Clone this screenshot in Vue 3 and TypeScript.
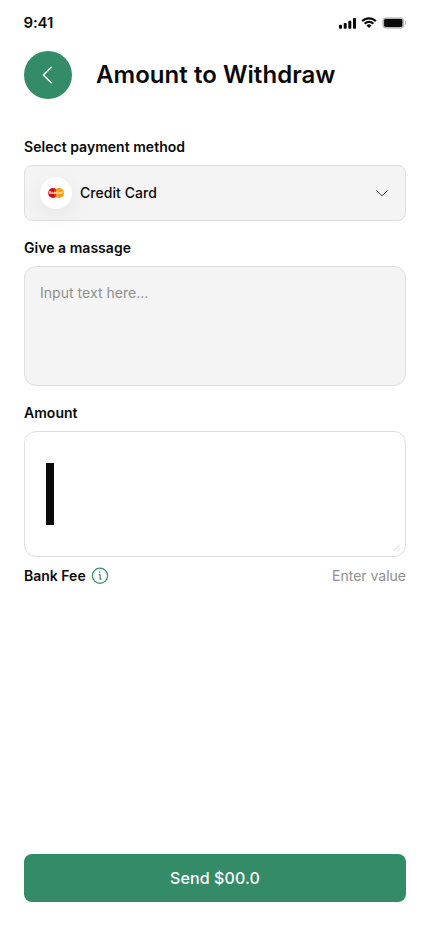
<script setup lang="ts">
import { ref } from 'vue'

const message = ref<string>('')
const method = ref<string>('Credit Card')
const total = ref<string>('$00.0')
const bars: { x: number; h: number }[] = [
  { x: 0, h: 4 },
  { x: 4.7, h: 5.7 },
  { x: 9.3, h: 8 },
  { x: 14, h: 10.7 },
]
</script>

<template>
  <main class="screen">
    <div class="status">
      <span class="time">9:41</span>
      <div class="indicators">
        <svg width="17" height="11" viewBox="0 0 17 11">
          <rect v-for="b in bars" :key="b.x" :x="b.x" :y="10.8 - b.h" width="3" :height="b.h" rx="0.8" fill="#0a0a0a" />
        </svg>
        <svg width="16" height="12" viewBox="0 0 16 12" fill="#0a0a0a">
          <path d="M8 2.4c2.2 0 4.3.85 5.9 2.35.12.12.31.12.43 0l1.15-1.16a.32.32 0 0 0 0-.46c-4.18-4-10.78-4-14.96 0a.32.32 0 0 0 0 .46l1.15 1.16c.12.12.31.12.43 0A8.6 8.6 0 0 1 8 2.4Z" />
          <path d="M8 6.1c1.2 0 2.37.45 3.26 1.26.12.12.32.12.44 0l1.15-1.17a.33.33 0 0 0 0-.46 7.1 7.1 0 0 0-9.7 0 .33.33 0 0 0 0 .46l1.15 1.17c.12.12.32.12.44 0A4.8 4.8 0 0 1 8 6.1Z" />
          <path d="M10.3 8.65c.13-.13.13-.34-.01-.46a3.5 3.5 0 0 0-4.58 0 .32.32 0 0 0-.01.46l2 2.02c.16.16.42.16.58 0Z" />
        </svg>
        <svg width="25" height="12" viewBox="0 0 25 12">
          <rect x="0.9" y="0.9" width="20.6" height="10.2" rx="2.6" fill="#b5b5b5" stroke="#b5b5b5" />
          <rect x="2.1" y="2.1" width="18.2" height="7.8" rx="1.4" fill="#0a0a0a" />
          <path d="M23 4v4c.8-.35 1.3-1.1 1.3-2s-.5-1.65-1.3-2Z" fill="#b5b5b5" />
        </svg>
      </div>
    </div>

    <header class="header">
      <button class="back" aria-label="Back">
        <svg width="24" height="24" viewBox="0 0 24 24" fill="none" stroke="#fff" stroke-width="1.4" stroke-linecap="round" stroke-linejoin="round">
          <path d="M15.2 4.2 7.4 12l7.8 7.8" />
        </svg>
      </button>
      <h1>Amount to Withdraw</h1>
    </header>

    <form class="form" @submit.prevent>
      <label class="label">Select payment method</label>
      <button type="button" class="select">
        <span class="brand">
          <svg class="brand-logo" width="16" height="10" viewBox="0 0 16 10">
            <circle cx="5" cy="5" r="4.9" fill="#cc1016" />
            <circle cx="11" cy="5" r="4.9" fill="#ff9c0a" />
            <path d="M8 1.1a4.9 4.9 0 0 0 0 7.8Z" fill="#d8430f" />
            <text x="1" y="6.3" textLength="13.6" lengthAdjust="spacingAndGlyphs" class="brand-text">MasterCard</text>
          </svg>
        </span>
        <span class="method">{{ method }}</span>
        <svg width="16" height="16" viewBox="0 0 16 16" fill="none" stroke="#3c3c3c" stroke-width="1" stroke-linecap="round" stroke-linejoin="round">
          <path d="m2.8 5.8 5.2 5 5.2-5" />
        </svg>
      </button>

      <label class="label" for="message">Give a massage</label>
      <textarea id="message" v-model="message" class="message" placeholder="Input text here..."></textarea>

      <label class="label">Amount</label>
      <div class="amount">
        <span class="caret"></span>
        <svg class="grip" width="8" height="8" viewBox="0 0 8 8" stroke="#d8d8d8" stroke-width="0.9" stroke-linecap="round">
          <path d="M.7 6.8 6.5 1M4.2 7.3l2.8-2.8" />
        </svg>
      </div>

      <div class="fee">
        <span class="fee-label">Bank Fee</span>
        <svg width="18" height="18" viewBox="0 0 18 18" fill="none" stroke="#348b67" stroke-width="1.2" stroke-linecap="round" stroke-linejoin="round">
          <circle cx="9" cy="8.7" r="7.6" />
          <path d="M8.1 7.7h1v4.5h.9" />
          <circle cx="8.8" cy="5.1" r="0.8" fill="#348b67" stroke="none" />
        </svg>
        <span class="value">Enter value</span>
      </div>
    </form>

    <button class="send">Send {{ total }}</button>
  </main>
</template>

<style>
body {
  background: #fff;
}
</style>

<style scoped>
.screen {
  box-sizing: border-box;
  display: flex;
  flex-direction: column;
  width: 430px;
  height: 932px;
  padding: 0 24px 30px;
  background: #fff;
  color: #0a0a0a;
  font-family: Inter, sans-serif;
}
.screen * {
  box-sizing: border-box;
}
button,
textarea {
  margin: 0;
  font-family: inherit;
  color: inherit;
}
svg {
  display: block;
  flex: none;
}
.status {
  display: flex;
  justify-content: space-between;
  align-items: center;
  height: 46px;
}
.time {
  margin: -2px 0 0 -0.5px;
  font-size: 15px;
  font-weight: 600;
  letter-spacing: -0.15px;
}
.indicators {
  display: flex;
  align-items: center;
  gap: 5px;
  margin-right: -1px;
}
.header {
  display: flex;
  align-items: center;
  gap: 24px;
  margin-top: 5px;
}
.back {
  display: flex;
  align-items: center;
  justify-content: center;
  width: 48px;
  height: 48px;
  padding: 0;
  border: 0;
  border-radius: 50%;
  background: #348b67;
}
h1 {
  margin: 0;
  font-size: 24px;
  font-weight: 600;
  line-height: 32px;
  letter-spacing: 0.05px;
}
.form {
  display: flex;
  flex-direction: column;
  margin-top: 37px;
}
.label {
  margin-bottom: 8px;
  font-size: 14px;
  font-weight: 600;
  line-height: 21px;
  letter-spacing: 0.03px;
}
.select {
  display: flex;
  align-items: center;
  gap: 8px;
  height: 56px;
  margin-bottom: 16px;
  padding: 0 15px;
  border: 1px solid #dedede;
  border-radius: 8px;
  background: #f4f4f4;
  text-align: left;
}
.brand {
  display: flex;
  align-items: center;
  justify-content: center;
  width: 32px;
  height: 32px;
  border-radius: 50%;
  background: #fff;
  box-shadow: 0 8px 24px rgba(0, 0, 0, 0.07);
}
.brand-logo {
  overflow: visible;
}
.brand-text {
  fill: #fff;
  font-size: 3.4px;
  font-weight: 700;
}
.method {
  flex: 1;
  margin-top: -1px;
  font-size: 14px;
  font-weight: 500;
  line-height: 21px;
  letter-spacing: 0.05px;
}
.message {
  height: 120px;
  margin-bottom: 16px;
  padding: 15px;
  border: 1px solid #dedede;
  border-radius: 12px;
  outline: 0;
  background: #f4f4f4;
  font-size: 14px;
  line-height: 21px;
  letter-spacing: 0.03px;
  resize: none;
}
.message::placeholder {
  color: #8f8f8f;
  opacity: 1;
}
.amount {
  position: relative;
  display: flex;
  align-items: center;
  height: 126px;
  padding-left: 21px;
  border: 1px solid #dedede;
  border-radius: 12px;
}
.caret {
  width: 7.7px;
  height: 62px;
  background: #0a0a0a;
}
.grip {
  position: absolute;
  right: 4px;
  bottom: 4px;
}
.fee {
  display: flex;
  align-items: center;
  gap: 5px;
  margin-top: 8px;
  font-size: 14px;
  line-height: 21px;
}
.fee-label {
  font-weight: 600;
}
.value {
  margin-left: auto;
  color: #8f8f8f;
}
.send {
  height: 48px;
  margin-top: auto;
  border: 0;
  border-radius: 8px;
  background: #348b67;
  color: #fff;
  font-size: 16px;
  font-weight: 500;
  letter-spacing: 0.1px;
}
</style>
